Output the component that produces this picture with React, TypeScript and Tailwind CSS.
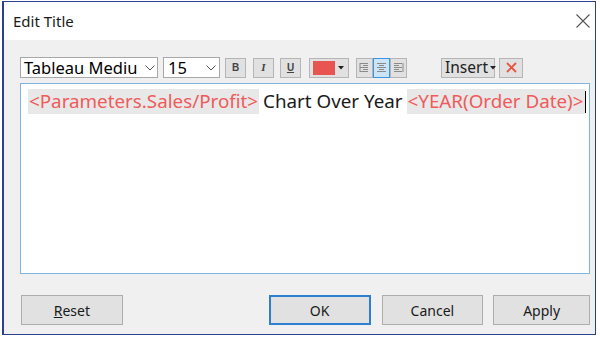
import React from "react";

const Chevron = () => (
  <svg width="10" height="6" viewBox="0 0 10 6" className="shrink-0">
    <path d="M0.5 0.5 L5 5 L9.5 0.5" fill="none" stroke="#555" strokeWidth="1" />
  </svg>
);

const Caret = () => (
  <svg width="6" height="4" viewBox="0 0 6 4" className="shrink-0">
    <path d="M0 0 L6 0 L3 3.5 Z" fill="#222" />
  </svg>
);

const AlignIcon = ({ kind }: { kind: "left" | "center" | "right" }) => {
  const rows =
    kind === "left"
      ? [[1, 9], [4, 9], [1, 9], [4, 9], [1, 9]]
      : kind === "center"
      ? [[1, 10], [3, 8], [1, 10], [3, 8], [1, 10]]
      : [[1, 9], [1, 6], [1, 9], [1, 6], [1, 9]];
  return (
    <svg width="11" height="9" viewBox="0 0 11 9">
      {rows.map((r, i) => (
        <line key={i} x1={r[0]} x2={r[1]} y1={i * 2 + 0.5} y2={i * 2 + 0.5} stroke="#8a8a8a" strokeWidth="1" />
      ))}
      {kind === "left" && <line x1="1" x2="1" y1="0" y2="9" stroke="#8a8a8a" />}
      {kind === "right" && <line x1="10" x2="10" y1="0" y2="9" stroke="#8a8a8a" />}
    </svg>
  );
};

export default function App() {
  return (
    <div className="w-[600px] h-[340px] bg-white" style={{ fontFamily: '"Noto Sans", "Open Sans", sans-serif' }}>
      <div className="ml-[2px] mt-[1px] w-[594px] h-[334px] border border-[#2d3f8f] border-l-[2px] flex flex-col bg-[#f0f0f0]">
        {/* title bar */}
        <div className="h-[38px] bg-white flex items-center justify-between pl-[9px] pr-[4px] shrink-0">
          <span className="text-[15px] text-[#1a1a1a]">Edit Title</span>
          <svg width="16" height="16" viewBox="0 0 16 16">
            <path d="M1.5 1.5 L14.5 14.5 M14.5 1.5 L1.5 14.5" stroke="#555" strokeWidth="1.1" />
          </svg>
        </div>
        {/* body */}
        <div className="flex-1 flex flex-col pl-[16px] pr-[5px]">
          {/* toolbar */}
          <div className="flex items-center mt-[17px] h-[21px]">
            <div className="w-[138px] h-[21px] bg-white border border-[#a8a8a8] flex items-center justify-between pl-[3px] pr-[2px]">
              <span className="text-[16.5px] text-black leading-[20px] whitespace-nowrap">Tableau Mediu</span>
              <Chevron />
            </div>
            <div className="ml-[5px] w-[57px] h-[21px] bg-white border border-[#a8a8a8] flex items-center justify-between pl-[4px] pr-[3px]">
              <span className="text-[16.5px] text-black leading-[20px]">15</span>
              <Chevron />
            </div>
            <div className="ml-[5px] w-[21px] h-[20px] bg-[#e1e1e1] border border-[#b5b5b5] flex items-center justify-center text-[10px] font-bold text-[#444]" style={{ fontFamily: '"Liberation Sans", sans-serif' }}>B</div>
            <div className="ml-[7px] w-[21px] h-[20px] bg-[#e1e1e1] border border-[#b5b5b5] flex items-center justify-center text-[11px] font-bold italic text-[#444]" style={{ fontFamily: '"Liberation Serif", serif' }}>I</div>
            <div className="ml-[6px] w-[21px] h-[20px] bg-[#e1e1e1] border border-[#b5b5b5] flex items-center justify-center text-[10px] font-bold underline text-[#444]" style={{ fontFamily: '"Liberation Sans", sans-serif' }}>U</div>
            <div className="ml-[8px] w-[40px] h-[20px] bg-[#e1e1e1] border border-[#b5b5b5] flex items-center pl-[3px] gap-[3px]">
              <div className="w-[22px] h-[14px] bg-[#e85450]" />
              <Caret />
            </div>
            <div className="ml-[7px] flex h-[20px]">
              <div className="w-[17px] h-[20px] bg-[#e1e1e1] border border-[#b5b5b5] flex items-center justify-center"><AlignIcon kind="left" /></div>
              <div className="w-[17px] h-[20px] bg-[#cce4f7] border border-[#3b95e0] flex items-center justify-center"><AlignIcon kind="center" /></div>
              <div className="w-[17px] h-[20px] bg-[#e1e1e1] border border-[#b5b5b5] flex items-center justify-center"><AlignIcon kind="right" /></div>
            </div>
            <div className="ml-[34px] w-[54px] h-[20px] bg-[#e1e1e1] border border-[#b5b5b5] flex items-center pl-[3px] gap-[2px]">
              <span className="text-[15.5px] text-[#222] leading-none">Insert</span>
              <Caret />
            </div>
            <div className="ml-[4px] w-[24px] h-[20px] bg-[#e1e1e1] border border-[#b5b5b5] flex items-center justify-center">
              <svg width="11" height="11" viewBox="0 0 11 11">
                <path d="M1 1 L10 10 M10 1 L1 10" stroke="#e8533f" strokeWidth="1.8" />
              </svg>
            </div>
          </div>
          {/* text area */}
          <div className="mt-[5px] h-[191px] bg-white border border-[#7db4e3] pl-[7px] pt-[5px]">
            <div className="flex items-center h-[25px] text-[18.8px] whitespace-nowrap">
              <span className="bg-[#e8e8e8] text-[#ef5b5b] px-[1px] leading-[25px]">&lt;Parameters.Sales/Profit&gt;</span>
              <span className="text-[#1a1a1a] px-[4px] leading-[25px]">Chart Over Year</span>
              <span className="bg-[#e8e8e8] text-[#ef5b5b] px-[1px] leading-[25px]">&lt;YEAR(Order Date)&gt;</span>
              <span className="w-[1px] h-[22px] bg-black" />
            </div>
          </div>
          {/* buttons */}
          <div className="flex items-center mt-[21px] h-[30px] text-[14px] text-[#1a1a1a]">
            <div className="ml-[1px] w-[102px] h-[30px] bg-[#e1e1e1] border border-[#adadad] flex items-center justify-center"><span><span className="underline">R</span>eset</span></div>
            <div className="ml-[146px] w-[102px] h-[30px] bg-[#e1e1e1] border-2 border-[#2e7fd0] flex items-center justify-center">OK</div>
            <div className="ml-[11px] w-[102px] h-[30px] bg-[#e1e1e1] border border-[#adadad] flex items-center justify-center">Cancel</div>
            <div className="ml-[10px] w-[97px] h-[30px] bg-[#e1e1e1] border border-[#adadad] flex items-center justify-center">Apply</div>
          </div>
        </div>
      </div>
    </div>
  );
}
